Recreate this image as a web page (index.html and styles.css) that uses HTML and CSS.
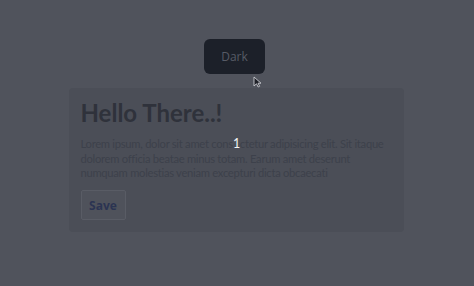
FILE: index.html
```html
<!DOCTYPE html>
<html>
<head>
<meta charset="utf-8">
<link rel="stylesheet" href="styles.css">
</head>
<body>
<div class="page">
  <div class="toggle-wrap">
    <button class="toggle">Dark</button>
    <svg class="cursor" width="9" height="12" viewBox="0 0 9 12"><path d="M1 1 L1 10 L3.5 7.8 L5.2 11 L6.6 10.3 L5 7.2 L8 7.2 Z" fill="#1f2128" stroke="#c9cbd0" stroke-width="0.9"/></svg>
  </div>
  <div class="card">
    <h1 class="title">Hello There..!</h1>
    <p class="text">Lorem ipsum, dolor sit amet cons<span class="mark">1</span>ctetur adipisicing elit. Sit itaque<br>dolorem officia beatae minus totam. Earum amet deserunt<br>numquam molestias veniam excepturi dicta obcaecati</p>
    <button class="save">Save</button>
  </div>
</div>
</body>
</html>
```
FILE: styles.css
```css
html, body {
  margin: 0;
  padding: 0;
}
body {
  background: #50535c;
  font-family: "Lato", "Open Sans", sans-serif;
  width: 474px;
  height: 286px;
  overflow: hidden;
}
.page {
  display: flex;
  flex-direction: column;
  align-items: center;
  padding-top: 39px;
}
.toggle-wrap {
  position: relative;
  margin-left: -5px;
}
.toggle {
  display: block;
  width: 61px;
  height: 35px;
  border: none;
  border-radius: 6px;
  background: #1c2029;
  color: #575b66;
  font-family: "Open Sans", sans-serif;
  font-size: 12px;
  padding: 0;
}
.cursor {
  position: absolute;
  left: 49px;
  top: 37px;
}
.card {
  margin-top: 14px;
  width: 311px;
  padding: 12px;
  background: #4b4e57;
  border-radius: 4px;
  margin-left: -2px;
}
.title {
  margin: 0;
  font-size: 24px;
  font-weight: 700;
  line-height: 26px;
  color: #2f323b;
}
.text {
  margin: 11px 0 9px;
  font-size: 11.2px;
  line-height: 14.7px;
  letter-spacing: -0.27px;
  color: #3d414b;
  white-space: nowrap;
}
.mark {
  color: #f2f3f5;
  font-size: 12.5px;
}
.save {
  display: block;
  width: 45px;
  height: 30px;
  padding: 0;
  background: #4f525b;
  border: 1px solid #595c65;
  border-radius: 2px;
  color: #2b3452;
  font-family: "Open Sans", sans-serif;
  font-weight: 700;
  font-size: 12px;
}
```
